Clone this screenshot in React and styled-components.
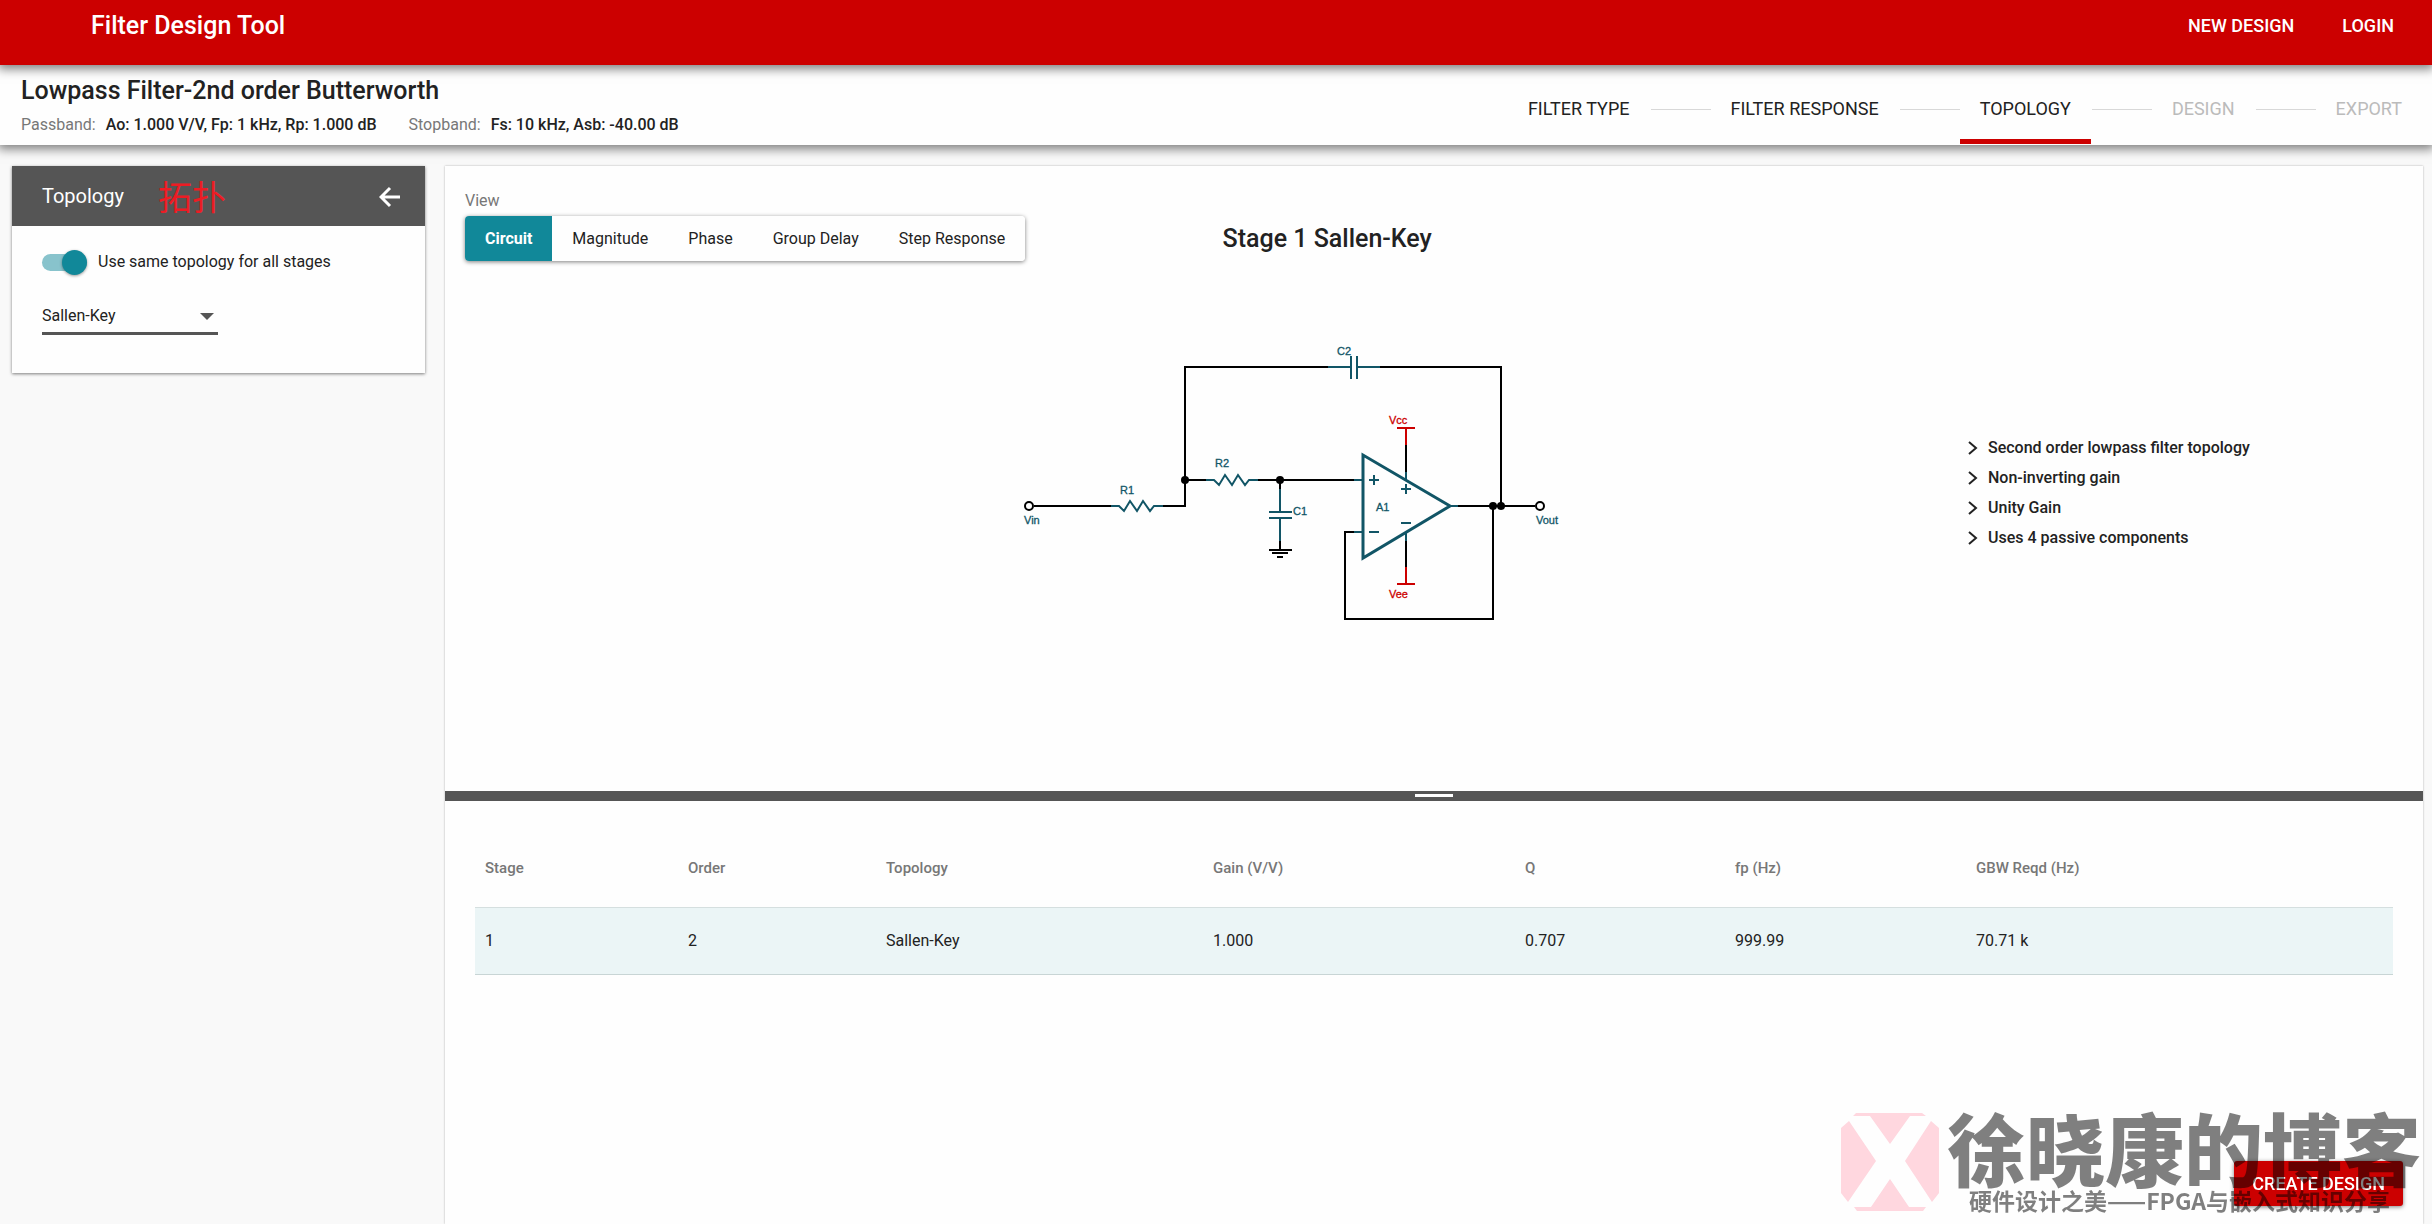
import React, { useState } from "react";
import styled, { createGlobalStyle } from "styled-components";

const STEPS = [
    { label: "FILTER TYPE" },
    { label: "FILTER RESPONSE" },
    { label: "TOPOLOGY", active: true },
    { label: "DESIGN", disabled: true },
    { label: "EXPORT", disabled: true },
];

const VIEWS = ["Circuit", "Magnitude", "Phase", "Group Delay", "Step Response"];

const FEATURES = [
    "Second order lowpass filter topology",
    "Non-inverting gain",
    "Unity Gain",
    "Uses 4 passive components",
];

const COLUMNS = [
    { title: "Stage", share: 203 },
    { title: "Order", share: 198 },
    { title: "Topology", share: 327 },
    { title: "Gain (V/V)", share: 312 },
    { title: "Q", share: 210 },
    { title: "fp (Hz)", share: 241 },
    { title: "GBW Reqd (Hz)", share: 427 },
];

const ROWS = [["1", "2", "Sallen-Key", "1.000", "0.707", "999.99", "70.71 k"]];

const TOTAL = COLUMNS.reduce((sum, column) => sum + column.share, 0);

const Circuit = () => (
    <Schematic viewBox="1020 340 550 306" role="img" aria-label="Sallen-Key circuit">
        <g fill="none" stroke="#000" strokeWidth="2">
            <path d="M1035 506H1112" />
            <path d="M1163 506H1186V367H1329" />
            <path d="M1186 480H1208M1259 480H1355" />
            <path d="M1381 367H1502V506" />
            <path d="M1355 532H1346V619H1494V506" />
            <path d="M1459 506H1536" />
            <path d="M1407 445V472M1407 541V567" />
            <path d="M1281 480V489M1281 541V550" />
            <path d="M1270 550H1293M1273 553H1289M1278 557H1284" />
        </g>
        <g fill="none" stroke="#115566" strokeWidth="2">
            <path d="M1112 506H1120L1125 511L1131 501L1138 511L1144 501L1151 511L1155 506H1164" />
            <path d="M1207 480H1215L1220 485L1226 475L1233 485L1239 475L1246 485L1250 480H1259" />
            <path d="M1329 367H1352M1358 367H1381M1352 356V379M1358 356V379" />
            <path d="M1281 489V512M1281 518V541M1270 512H1293M1270 518H1293" />
            <path d="M1355 480H1363M1355 532H1363M1451 506H1459M1407 472V481M1407 532V541" />
            <path d="M1370 480H1380M1375 475V485M1402 489H1412M1407 484V494" />
            <path d="M1370 532H1380M1402 523H1412" />
            <path d="M1364 455V558L1451 506Z" strokeWidth="3" />
        </g>
        <path d="M1407 445V428M1398 428H1416M1407 567V584M1398 584H1416" fill="none" stroke="#cc0000" strokeWidth="2" />
        <circle cx="1186" cy="480" r="4" />
        <circle cx="1281" cy="480" r="4" />
        <circle cx="1494" cy="506" r="4" />
        <circle cx="1502" cy="506" r="4" />
        <g fill="#fff" stroke="#000" strokeWidth="2">
            <circle cx="1030" cy="506" r="4" />
            <circle cx="1541" cy="506" r="4" />
        </g>
        <PartLabel x="1121" y="494">R1</PartLabel>
        <PartLabel x="1216" y="467">R2</PartLabel>
        <PartLabel x="1294" y="515">C1</PartLabel>
        <PartLabel x="1338" y="355">C2</PartLabel>
        <PartLabel x="1377" y="511">A1</PartLabel>
        <PartLabel x="1025" y="524">Vin</PartLabel>
        <PartLabel x="1537" y="524">Vout</PartLabel>
        <PartLabel x="1390" y="424" $supply>Vcc</PartLabel>
        <PartLabel x="1390" y="598" $supply>Vee</PartLabel>
    </Schematic>
);

const App = () => {
    const [view, setView] = useState("Circuit");
    const [same, setSame] = useState(true);

    return (
        <Page>
            <GlobalStyle />
            <TopBar>
                <Brand>Filter Design Tool</Brand>
                <TopActions>
                    <TopButton>NEW DESIGN</TopButton>
                    <TopButton>LOGIN</TopButton>
                </TopActions>
            </TopBar>

            <SubHeader>
                <Summary>
                    <DesignName>Lowpass Filter-2nd order Butterworth</DesignName>
                    <Specs>
                        <Spec><SpecName>Passband:</SpecName>Ao: 1.000 V/V, Fp: 1 kHz, Rp: 1.000 dB</Spec>
                        <Spec><SpecName>Stopband:</SpecName>Fs: 10 kHz, Asb: -40.00 dB</Spec>
                    </Specs>
                </Summary>
                <Steps>
                    {STEPS.map((step) => (
                        <Step key={step.label} type="button" disabled={step.disabled} $active={step.active}>
                            {step.label}
                        </Step>
                    ))}
                </Steps>
            </SubHeader>

            <Body>
                <SidePanel>
                    <SideHeader>
                        <SideTitle>Topology</SideTitle>
                        <SideNote>拓扑</SideNote>
                        <BackButton aria-label="Collapse">
                            <svg width="22" height="24" viewBox="0 0 22 24" fill="none" stroke="#fff" strokeWidth="3">
                                <path d="M21 13H3M11 4L2 13L11 22" />
                            </svg>
                        </BackButton>
                    </SideHeader>
                    <SideBody>
                        <SwitchLabel>
                            <Switch type="checkbox" role="switch" checked={same} onChange={() => setSame(!same)} />
                            Use same topology for all stages
                        </SwitchLabel>
                        <SelectBox>
                            <Select aria-label="Topology" defaultValue="Sallen-Key">
                                <option>Sallen-Key</option>
                            </Select>
                            <Caret viewBox="0 0 14 7"><path d="M0 0H14L7 7Z" fill="#555" /></Caret>
                        </SelectBox>
                    </SideBody>
                </SidePanel>

                <Main>
                    <Stage>
                        <StageTop>
                            <div>
                                <ViewLabel>View</ViewLabel>
                                <Tabs>
                                    {VIEWS.map((name) => (
                                        <Tab key={name} $active={view === name} onClick={() => setView(name)}>
                                            {name}
                                        </Tab>
                                    ))}
                                </Tabs>
                            </div>
                            <StageTitle>Stage 1 Sallen-Key</StageTitle>
                        </StageTop>
                        <StageContent>
                            <Circuit />
                            <Features>
                                {FEATURES.map((feature) => (
                                    <Feature key={feature}>
                                        <svg width="10" height="16" viewBox="0 0 10 16" fill="none" stroke="#222" strokeWidth="2">
                                            <path d="M1 2L8 8L1 14" />
                                        </svg>
                                        {feature}
                                    </Feature>
                                ))}
                            </Features>
                        </StageContent>
                    </Stage>
                    <Splitter><Handle /></Splitter>
                    <TableArea>
                        <Table>
                            <colgroup>
                                {COLUMNS.map((column) => (
                                    <col key={column.title} style={{ width: `${(column.share / TOTAL) * 100}%` }} />
                                ))}
                            </colgroup>
                            <thead>
                                <tr>{COLUMNS.map((column) => <Th key={column.title}>{column.title}</Th>)}</tr>
                            </thead>
                            <tbody>
                                {ROWS.map((row) => (
                                    <tr key={row[0]}>{row.map((cell, i) => <Td key={COLUMNS[i].title}>{cell}</Td>)}</tr>
                                ))}
                            </tbody>
                        </Table>
                    </TableArea>
                </Main>
            </Body>

            <CreateButton>CREATE DESIGN</CreateButton>
            <Watermark>
                <WatermarkLogo viewBox="0 0 98 98">
                    <g fill="#ffb0c0">
                        <path d="M15 0H81L85 3H69L49 31L29 3H12Z" />
                        <path d="M0 15L8 8L35 48L7 89L0 80Z" />
                        <path d="M98 15L90 8L64 48L91 89L98 80Z" />
                        <path d="M49 66L68 94H85L82 98H16L13 94H30Z" />
                    </g>
                </WatermarkLogo>
                <div>
                    <WatermarkName>徐晓康的博客</WatermarkName>
                    <WatermarkText>硬件设计之美——FPGA与嵌入式知识分享</WatermarkText>
                </div>
            </Watermark>
        </Page>
    );
}

const GlobalStyle = createGlobalStyle`
    * {
        box-sizing: border-box;
    }

    body {
        margin: 0;
        background-color: #f9f9f9;
        color: #222;
        font-family: Roboto, "Noto Sans CJK SC", sans-serif;
        font-size: 16px;
        line-height: 20px;
    }

    button, select, input {
        margin: 0;
        padding: 0;
        border: none;
        background: none;
        color: inherit;
        font: inherit;
    }
`;

const Page = styled.div`
    display: flex;
    flex-direction: column;
    min-height: 100vh;
`;

const TopBar = styled.header`
    display: flex;
    justify-content: space-between;
    align-items: flex-start;
    position: relative;
    z-index: 2;
    height: 65px;
    padding: 12px 38px 0 91px;
    background-color: #cc0000;
    color: white;
    box-shadow: 0 2px 10px 2px rgba(0, 0, 0, 0.5);
`;

const Brand = styled.h1`
    margin: 0;
    font-size: 25px;
    font-weight: 500;
    line-height: 28px;
`;

const TopActions = styled.nav`
    display: flex;
    gap: 48px;
`;

const TopButton = styled.button`
    font-size: 18px;
    font-weight: 500;
    line-height: 28px;
`;

const SubHeader = styled.section`
    display: flex;
    justify-content: space-between;
    position: relative;
    z-index: 1;
    height: 80px;
    padding: 0 10px 0 21px;
    background-color: #fefefe;
    box-shadow: 0 2px 10px 2px rgba(0, 0, 0, 0.5);
`;

const Summary = styled.div`
    padding-top: 12px;
`;

const DesignName = styled.h2`
    margin: 0 0 10px;
    font-size: 25px;
    font-weight: 500;
    line-height: 28px;
`;

const Specs = styled.div`
    display: flex;
    gap: 32px;
`;

const Spec = styled.span`
    font-weight: 500;
`;

const SpecName = styled.span`
    margin-right: 10px;
    color: #777;
    font-weight: 400;
`;

const Steps = styled.nav`
    display: flex;
`;

const Step = styled.button`
    display: flex;
    align-items: center;
    position: relative;
    padding: 8px 20px 0;
    color: ${({ disabled }) => (disabled ? "#bbb" : "#222")};
    font-size: 18px;

    &:not(:first-child) {
        margin-left: 61px;
    }

    &:not(:first-child)::before {
        content: "";
        position: absolute;
        right: 100%;
        width: 60px;
        height: 1px;
        background-color: #d8d8d8;
    }

    &::after {
        content: "";
        display: ${({ $active }) => ($active ? "block" : "none")};
        position: absolute;
        right: 0;
        bottom: 1px;
        left: 0;
        height: 5px;
        background-color: #cc0000;
    }
`;

const Body = styled.div`
    display: flex;
    flex: 1;
    gap: 20px;
    padding: 21px 9px 0 12px;
`;

const SidePanel = styled.aside`
    flex: none;
    align-self: flex-start;
    width: 413px;
    background-color: #fefefe;
    box-shadow: 0 1px 3px rgba(0, 0, 0, 0.5);
`;

const SideHeader = styled.div`
    display: flex;
    align-items: center;
    height: 60px;
    padding: 0 24px 0 30px;
    background-color: #555;
    color: white;
`;

const SideTitle = styled.h3`
    margin: 0;
    font-size: 20px;
    font-weight: 400;
`;

const SideNote = styled.span`
    margin-left: 34px;
    color: #ed1c24;
    font-family: "Noto Sans CJK SC", sans-serif;
    font-size: 34px;
    font-weight: 400;
`;

const BackButton = styled.button`
    display: flex;
    margin-left: auto;
`;

const SideBody = styled.div`
    display: flex;
    flex-direction: column;
    align-items: flex-start;
    gap: 28px;
    padding: 26px 30px 38px;
`;

const SwitchLabel = styled.label`
    display: flex;
    align-items: center;
    gap: 11px;
    height: 20px;
`;

const Switch = styled.input`
    appearance: none;
    position: relative;
    width: 45px;
    height: 17px;
    border-radius: 9px;
    background-color: #88c3cc;

    &::after {
        content: "";
        position: absolute;
        top: -4px;
        right: ${({ checked }) => (checked ? "0" : "20px")};
        width: 25px;
        height: 25px;
        border-radius: 50%;
        background-color: #118899;
        box-shadow: 0 1px 3px rgba(0, 0, 0, 0.4);
    }
`;

const SelectBox = styled.div`
    display: flex;
    align-items: center;
    position: relative;
    width: 176px;
    border-bottom: 3px solid #555;
`;

const Select = styled.select`
    appearance: none;
    width: 100%;
    height: 32px;
`;

const Caret = styled.svg`
    position: absolute;
    right: 4px;
    width: 14px;
    height: 7px;
    pointer-events: none;
`;

const Main = styled.main`
    display: flex;
    flex: 1;
    flex-direction: column;
    background-color: #fefefe;
    box-shadow: 0 0 2px rgba(0, 0, 0, 0.3);
`;

const Stage = styled.section`
    padding: 25px 20px 0;
`;

const StageTop = styled.div`
    display: grid;
    grid-template-columns: 39fr auto 50fr;
    align-items: end;
`;

const ViewLabel = styled.div`
    margin-bottom: 5px;
    color: #777;
`;

const Tabs = styled.div`
    display: inline-flex;
    border-radius: 4px;
    overflow: hidden;
    box-shadow: 0 1px 4px rgba(0, 0, 0, 0.5);
`;

const Tab = styled.button`
    height: 45px;
    padding: 0 20px;
    background-color: ${({ $active }) => ($active ? "#118899" : "#fefefe")};
    color: ${({ $active }) => ($active ? "white" : "#222")};
    font-weight: ${({ $active }) => ($active ? 700 : 400)};
`;

const StageTitle = styled.h2`
    margin: 0 0 8px;
    font-size: 25px;
    font-weight: 500;
    line-height: 28px;
`;

const StageContent = styled.div`
    display: grid;
    grid-template-columns: 1fr 435px;
    align-items: center;
    height: 530px;
    padding: 0 0 66px 8%;
`;

const Schematic = styled.svg`
    width: 550px;
    height: 306px;
    justify-self: center;
`;

const PartLabel = styled.text`
    fill: ${({ $supply }) => ($supply ? "#cc0000" : "#115566")};
    stroke: ${({ $supply }) => ($supply ? "#cc0000" : "#115566")};
    stroke-width: 0.3;
    font-family: "Liberation Sans", sans-serif;
    font-size: 11px;
`;

const Features = styled.ul`
    margin: 0;
    padding: 0;
    list-style: none;
`;

const Feature = styled.li`
    display: flex;
    align-items: center;
    gap: 10px;
    height: 30px;
    font-weight: 500;
`;

const Splitter = styled.div`
    display: flex;
    justify-content: center;
    height: 10px;
    padding-top: 3px;
    background-color: #555;
`;

const Handle = styled.div`
    width: 38px;
    height: 3px;
    background-color: #fefefe;
`;

const TableArea = styled.section`
    padding: 28px 30px 0;
`;

const Table = styled.table`
    width: 100%;
    table-layout: fixed;
    border-collapse: collapse;
    text-align: left;
`;

const Th = styled.th`
    height: 78px;
    padding: 0 10px;
    color: #777;
    font-size: 15px;
    font-weight: 500;
`;

const Td = styled.td`
    height: 67px;
    padding: 0 10px;
    border-top: 1px solid #d5dfdf;
    border-bottom: 1px solid #c8d5d5;
    background-color: #ebf5f6;
`;

const CreateButton = styled.button`
    position: fixed;
    right: 29px;
    bottom: 18px;
    height: 45px;
    padding: 0 18px;
    border-radius: 3px;
    background-color: #cc0000;
    color: white;
    font-size: 18px;
    font-weight: 500;
    box-shadow: 0 1px 4px rgba(0, 0, 0, 0.5);
`;

const Watermark = styled.div`
    display: flex;
    align-items: center;
    gap: 8px;
    position: fixed;
    right: 11px;
    bottom: 11px;
    z-index: 3;
    color: black;
    opacity: 0.5;
    pointer-events: none;
    font-family: "Noto Sans CJK SC", sans-serif;
`;

const WatermarkLogo = styled.svg`
    width: 98px;
    height: 98px;
`;

const WatermarkName = styled.div`
    margin-bottom: 4px;
    font-size: 79px;
    font-weight: 900;
    line-height: 72px;
`;

const WatermarkText = styled.div`
    padding-left: 22px;
    font-size: 23px;
    font-weight: 700;
    line-height: 26px;
`;

export default App;
